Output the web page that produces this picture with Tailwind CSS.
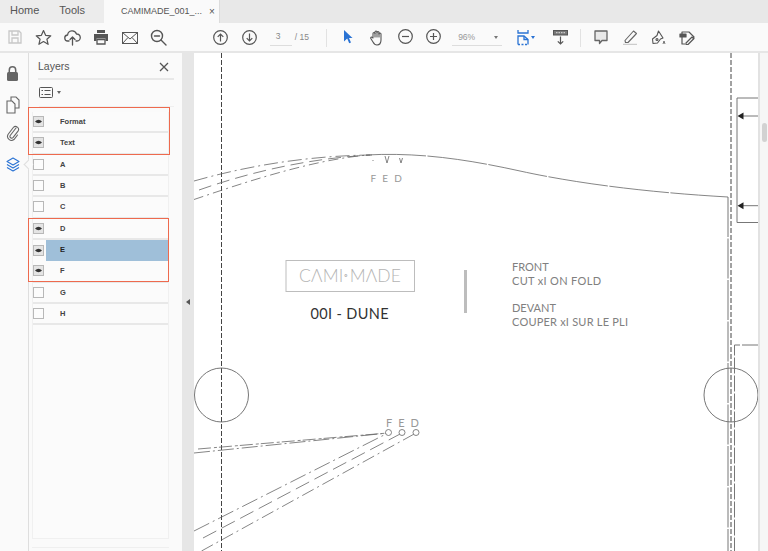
<!DOCTYPE html>
<html>
<head>
<meta charset="utf-8">
<script src="https://cdn.jsdelivr.net/npm/@tailwindcss/browser@4"></script>
</head>
<body class="m-0 bg-white">
<div class="relative w-[768px] h-[551px] overflow-hidden flex flex-col font-['Liberation_Sans',sans-serif] text-[#555]">
  <!-- tab bar -->
  <div class="h-[23px] flex bg-[#e8e8e8] shrink-0">
    <div class="w-[104px] flex items-center text-[11px] text-[#555] bg-[#ececec] pb-[2px]">
      <span class="ml-[10px]">Home</span>
      <span class="ml-[20px]">Tools</span>
    </div>
    <div class="w-[116px] flex items-center bg-[#fafafa] border-r border-[#dcdcdc] text-[9px] text-[#555] pt-[1px]">
      <span class="ml-[17px]">CAMIMADE_001_...</span>
      <span class="ml-[7px] text-[10px] leading-none">×</span>
    </div>
  </div>
  <!-- toolbar -->
  <div class="h-[30px] shrink-0 flex items-center bg-[#fafafa] border-b-2 border-[#e6e6e6] text-[#666] pt-[1px]">
    <div class="flex ml-px">
      <span class="w-[28.6px] flex justify-center"><svg width="16" height="16" viewBox="0 0 16 16" fill="none" stroke="#c8c8c8" stroke-width="1.3"><path d="M2 2h10l2 2v10H2z"/><path d="M5 2v4h6V2M5 14V9h6v5"/></svg></span>
      <span class="w-[28.6px] flex justify-center"><svg width="17" height="17" viewBox="0 0 17 17" fill="none" stroke="#555" stroke-width="1.2" stroke-linejoin="round"><path d="M8.5 1.5l2.1 4.8 5.2.5-3.9 3.4 1.2 5.1-4.6-2.7-4.6 2.7 1.2-5.1L1.2 6.8l5.2-.5z"/></svg></span>
      <span class="w-[28.6px] flex justify-center"><svg width="17" height="17" viewBox="0 0 17 17" fill="none" stroke="#555" stroke-width="1.3" stroke-linecap="round" stroke-linejoin="round"><path d="M5 12H4a3 3 0 0 1-.4-6A4.6 4.6 0 0 1 12.5 5a3.5 3.5 0 0 1 .5 7h-1"/><path d="M8.5 16V8M6 10.5l2.5-2.5 2.5 2.5"/></svg></span>
      <span class="w-[28.6px] flex justify-center"><svg width="16" height="16" viewBox="0 0 16 16"><path fill="#555" d="M4 1h8v3H4zM1 5h14v7h-2.5V9.500h-9V12H1z"/><path fill="none" stroke="#555" stroke-width="1.3" d="M4 10.500h8V15H4z"/></svg></span>
      <span class="w-[28.6px] flex justify-center items-center"><svg width="16" height="12" viewBox="0 0 16 12" fill="none" stroke="#555" stroke-width="1"><rect x=".5" y=".5" width="15" height="11"/><path d="M.5.500L8 7l7.500-6.500M.5 11.500L6 5.500M15.500 11.500L10 5.500"/></svg></span>
      <span class="w-[28.6px] flex justify-center"><svg width="17" height="17" viewBox="0 0 17 17" fill="none" stroke="#555" stroke-width="1.4" stroke-linecap="round"><circle cx="7" cy="7" r="5.500"/><path d="M4.500 7h5M11 11l5 5"/></svg></span>
    </div>
    <div class="flex ml-[34px]">
      <span class="w-[28.6px] flex justify-center"><svg width="15" height="15" viewBox="0 0 15 15" fill="none" stroke="#555" stroke-width="1.2"><circle cx="7.500" cy="7.500" r="6.800"/><path d="M7.500 11.500V4M4.700 6.800l2.800-2.800 2.800 2.800"/></svg></span>
      <span class="w-[28.6px] flex justify-center"><svg width="15" height="15" viewBox="0 0 15 15" fill="none" stroke="#555" stroke-width="1.2"><circle cx="7.500" cy="7.500" r="6.800"/><path d="M7.500 3.500V11M4.700 8.200l2.800 2.800 2.800-2.800"/></svg></span>
    </div>
    <span class="ml-[6px] w-[22px] h-[17px] border-b border-[#ddd] pl-[6px] text-[8.5px] text-[#888] leading-[15px]">3</span>
    <span class="ml-[3px] w-[18px] text-[8.5px] text-[#888]">/ 15</span>
    <span class="ml-[13px] w-px h-[18px] bg-[#e2e2e2]"></span>
    <div class="flex ml-[7px]">
      <span class="w-[28.6px] flex justify-center"><svg width="12" height="15" viewBox="0 0 12 15"><path fill="#2a73d4" d="M2 1l8.500 8H7l2 4.500-1.800.8L5.200 9.600 2 12.500z"/></svg></span>
      <span class="w-[28.6px] flex justify-center"><svg width="16" height="17" viewBox="0 0 16 17" fill="none" stroke="#555" stroke-width="1.1" stroke-linejoin="round" stroke-linecap="round"><path d="M4 9V4.500a1 1 0 0 1 2 0V3a1 1 0 0 1 2 0v.5a1 1 0 0 1 2 0V5a1 1 0 0 1 2 0v6c0 3-1.500 5-4 5-2 0-3-1-4-3L1.800 9.500c-.6-1 .8-2 1.500-1z"/><path d="M6 4.500V8M8 3.500V8M10 4v4"/></svg></span>
      <span class="w-[28.6px] flex justify-center"><svg width="15" height="15" viewBox="0 0 15 15" fill="none" stroke="#555" stroke-width="1.200"><circle cx="7.500" cy="7.500" r="6.800"/><path d="M4 7.500h7"/></svg></span>
      <span class="w-[28.6px] flex justify-center"><svg width="15" height="15" viewBox="0 0 15 15" fill="none" stroke="#555" stroke-width="1.200"><circle cx="7.500" cy="7.500" r="6.800"/><path d="M4 7.500h7M7.500 4v7"/></svg></span>
    </div>
    <div class="ml-[4px] w-[50px] h-[17px] border-b border-[#ddd] flex items-center text-[8.5px] text-[#999]">
      <span class="ml-[6px]">96%</span>
      <span class="ml-[19px] w-0 h-0 border-x-[2.500px] border-t-[3px] border-x-transparent border-t-[#777]"></span>
    </div>
    <span class="ml-[15px] flex items-center"><svg width="12" height="17" viewBox="0 0 12 17" fill="none" stroke="#2a73d4" stroke-width="1.300"><path d="M1 1v3h10V1M1 15.500V7h6l4 3.500v5"/><path d="M1 15.500h10" stroke-dasharray="2 1.500"/><path d="M7 7v3.500h4"/></svg><span class="ml-[2px] w-0 h-0 border-x-[2.500px] border-t-[3px] border-x-transparent border-t-[#2a73d4]"></span></span>
    <span class="ml-[17px] w-[16px] flex justify-center"><svg width="15" height="15" viewBox="0 0 15 15" fill="none" stroke="#555"><rect x=".5" y=".5" width="14" height="4.500" fill="#777"/><path d="M3 2.700h9" stroke="#ddd" stroke-dasharray="1.500 1"/><path d="M7.500 6.500V14M4.800 11.300l2.700 2.700 2.700-2.700" stroke-width="1.200"/></svg></span>
    <span class="ml-[12px] w-px h-[18px] bg-[#e2e2e2]"></span>
    <div class="flex ml-[6px]">
      <span class="w-[28.6px] flex justify-center"><svg width="14" height="15" viewBox="0 0 14 15" fill="#e9e9e9" stroke="#666" stroke-width="1.300" stroke-linejoin="round"><path d="M1 1h12v9.500H8L5.500 13.500V10.500H1z"/></svg></span>
      <span class="w-[28.6px] flex justify-center"><svg width="16" height="15" viewBox="0 0 16 15" fill="none" stroke="#666" stroke-width="1.100" stroke-linejoin="round"><path d="M3 10.500L11.500 1l3 2.500L6 12.500H3.500z"/><path d="M1 14.500h14" stroke="#ccc" stroke-width="1.500"/></svg></span>
      <span class="w-[28.6px] flex justify-center"><svg width="16" height="15" viewBox="0 0 16 15" fill="none" stroke="#555" stroke-width="1.100" stroke-linejoin="round"><path d="M7.500 1L6 5.500 1.500 9 2 13.500 6.500 13 9.500 9 12 8z"/><circle cx="6" cy="9.500" r="1"/><path d="M12 14l1-3 1 3" stroke-width=".8"/></svg></span>
      <span class="w-[28.6px] flex justify-center"><svg width="16" height="16" viewBox="0 0 16 16" fill="none" stroke="#555" stroke-width="1.200" stroke-linejoin="round"><path d="M1 4h6v3H1z" fill="#555"/><path d="M3 4V2h7l5 5-1 2M3 7v7h3"/><path d="M7 13l6-6 2 1.500-6 6H7z"/></svg></span>
    </div>
  </div>
  <!-- body -->
  <div class="flex-1 flex min-h-0">
    <!-- rail -->
    <div class="relative w-[29px] shrink-0 bg-[#fafafa] border-r border-[#dedede] flex flex-col items-center pt-[12px] pr-[3px]">
      <svg width="13" height="18" viewBox="0 0 13 18"><path fill="none" stroke="#666" stroke-width="1.500" d="M3.300 8V5a3.200 3.200 0 0 1 6.400 0v3"/><rect x="1" y="7" width="11" height="9" rx="1.500" fill="#666"/></svg>
      <svg width="14" height="18" viewBox="0 0 14 18" fill="#fafafa" stroke="#666" stroke-width="1.100" class="mt-[13px]"><path d="M5 1h5l3 3v8H5z"/><path d="M1 5h5l3 3v9H1z"/></svg>
      <svg width="14" height="18" viewBox="0 0 14 18" fill="none" stroke="#666" stroke-width="1.100" stroke-linecap="round" class="mt-[10px]"><path d="M10 4L4.200 11.500a1.800 1.800 0 0 0 2.800 2.200l5-6.500A3 3 0 0 0 7.300 3.500L2 10.500a4 4 0 0 0 6 5l3.500-4.500"/></svg>
      <svg width="14" height="16" viewBox="0 0 14 16" fill="none" stroke="#2a73d4" stroke-width="1.100" stroke-linejoin="round" class="mt-[15px]"><path d="M7 1l6 3.500L7 8 1 4.500z"/><path d="M1 7.500L7 11l6-3.500M1 10.500L7 14l6-3.500"/></svg>
      <span class="absolute right-[-4px] top-[108px] w-[7px] h-[7px] rotate-45 bg-[#fafafa] border-l border-b border-[#dedede]"></span>
    </div>
    <!-- panel -->
    <div class="w-[153px] shrink-0 bg-[#fafafa] flex flex-col">
      <div class="h-[27px] mx-[9px] mr-[8px] pt-[3px] flex items-center justify-between border-b-2 border-[#e8e8e8] text-[10.5px] text-[#555]">
        <span>Layers</span>
        <svg width="10" height="10" viewBox="0 0 10 10" stroke="#555" stroke-width="1.300" class="mr-[5px]"><path d="M1 1l8 8M9 1L1 9"/></svg>
      </div>
      <div class="h-[27px] ml-[10px] flex items-center border-b border-[#efefef] mr-[8px] pb-[1px]">
        <svg width="14" height="11" viewBox="0 0 14 11" fill="none" stroke="#555"><rect x=".5" y=".5" width="13" height="10" rx="1"/><path d="M2.500 3.500h1.500M5.500 3.500h6M2.500 7.500h1.500M5.500 7.500h6"/></svg>
        <span class="ml-[4px] w-0 h-0 border-x-[2.500px] border-t-[3px] border-x-transparent border-t-[#666]"></span>
      </div>
      <div class="ml-[3px] mr-[13px] h-[427px] mt-[5px] flex flex-col border-x border-b border-[#f0f0f0] text-[7.500px] font-bold text-[#444] bg-[#fbfbfb]">
        <div class="h-[21.330px] flex border-b-2 border-[#e8e8e8]"><span class="w-[27px] flex items-center"><span class="w-[11px] h-[11px] border border-[#b8b8b8] bg-[#e4e4e4] flex items-center justify-center"><svg width="7" height="5" viewBox="0 0 9 6"><path fill="#333" d="M0 3q4.500-4.500 9 0-4.500 4.500-9 0z"/></svg></span></span><span class="pt-[4px]">Format</span></div>
        <div class="h-[21.330px] flex border-b-2 border-[#e8e8e8]"><span class="w-[27px] flex items-center"><span class="w-[11px] h-[11px] border border-[#b8b8b8] bg-[#e4e4e4] flex items-center justify-center"><svg width="7" height="5" viewBox="0 0 9 6"><path fill="#333" d="M0 3q4.500-4.500 9 0-4.500 4.500-9 0z"/></svg></span></span><span class="pt-[4px]">Text</span></div>
        <div class="h-[21.330px] flex border-b-2 border-[#e8e8e8]"><span class="w-[27px] flex items-center"><span class="w-[11px] h-[11px] border border-[#b8b8b8] bg-[#fcfcfc]"></span></span><span class="pt-[4px]">A</span></div>
        <div class="h-[21.330px] flex border-b-2 border-[#e8e8e8]"><span class="w-[27px] flex items-center"><span class="w-[11px] h-[11px] border border-[#b8b8b8] bg-[#fcfcfc]"></span></span><span class="pt-[4px]">B</span></div>
        <div class="h-[21.330px] flex border-b-2 border-[#e8e8e8]"><span class="w-[27px] flex items-center"><span class="w-[11px] h-[11px] border border-[#b8b8b8] bg-[#fcfcfc]"></span></span><span class="pt-[4px]">C</span></div>
        <div class="h-[21.330px] flex border-b-2 border-[#e8e8e8]"><span class="w-[27px] flex items-center"><span class="w-[11px] h-[11px] border border-[#b8b8b8] bg-[#e4e4e4] flex items-center justify-center"><svg width="7" height="5" viewBox="0 0 9 6"><path fill="#333" d="M0 3q4.500-4.500 9 0-4.500 4.500-9 0z"/></svg></span></span><span class="pt-[4px]">D</span></div>
        <div class="h-[21.330px] flex"><span class="w-[13px] shrink-0 flex items-center"><span class="shrink-0 w-[11px] h-[11px] border border-[#b8b8b8] bg-[#e4e4e4] flex items-center justify-center"><svg width="7" height="5" viewBox="0 0 9 6"><path fill="#333" d="M0 3q4.500-4.500 9 0-4.500 4.500-9 0z"/></svg></span></span><span class="flex-1 bg-[#9fbfd9] pl-[14px] pt-[4px] text-[#222]">E</span></div>
        <div class="h-[21.330px] flex border-b-2 border-[#e8e8e8]"><span class="w-[27px] flex items-center"><span class="w-[11px] h-[11px] border border-[#b8b8b8] bg-[#e4e4e4] flex items-center justify-center"><svg width="7" height="5" viewBox="0 0 9 6"><path fill="#333" d="M0 3q4.500-4.500 9 0-4.500 4.500-9 0z"/></svg></span></span><span class="pt-[4px]">F</span></div>
        <div class="h-[21.330px] flex border-b-2 border-[#e8e8e8]"><span class="w-[27px] flex items-center"><span class="w-[11px] h-[11px] border border-[#b8b8b8] bg-[#fcfcfc]"></span></span><span class="pt-[4px]">G</span></div>
        <div class="h-[21.330px] flex border-b-2 border-[#e8e8e8]"><span class="w-[27px] flex items-center"><span class="w-[11px] h-[11px] border border-[#b8b8b8] bg-[#fcfcfc]"></span></span><span class="pt-[4px]">H</span></div>
      </div>
      <div class="ml-[3px] mr-[13px] mt-[8px] h-px bg-[#efefef]"></div>
    </div>
    <!-- gutter -->
    <div class="w-[12px] shrink-0 bg-[#e6e6e6] flex items-center justify-center">
      <span class="w-0 h-0 border-y-[3px] border-r-[4px] border-y-transparent border-r-[#555]"></span>
    </div>
    <!-- document -->
    <div class="flex-1 bg-white min-w-0">
      <svg width="564" height="498" viewBox="194 53 564 498" class="block" fill="none">
        <g stroke="#444" stroke-width="1">
          <path d="M221.500 53V551M731 53V551" stroke-dasharray="5 2"/>
        </g>
        <g stroke="#777" stroke-width="1">
          <circle cx="221.500" cy="395" r="27"/>
          <circle cx="731" cy="395" r="27"/>
          <path d="M758 98H737V222.500H758M743 116H758M743 205.700H758"/>
          <path d="M728 197V551" stroke-dasharray="40 1.500"/>
          <path d="M758 345H734.500V551" stroke-dasharray="16 2"/>
        </g>
        <path fill="#222" d="M737.500 116l6-3.500v7zM737.500 205.700l6-3.500v7z"/>
        <g stroke="#666" stroke-width=".8">
          <path d="M194 181C240 168 300 156 370 155" stroke-dasharray="14 4 2 4"/>
          <path d="M199 190C250 172 310 158 372 155" stroke-dasharray="13 6"/>
          <path d="M194 199.500C240 184 310 160 368 155" stroke-dasharray="10 4 2 4"/>
          <path d="M366 155C420 152 470 160 520 171S640 192 728 197" stroke-dasharray="60 1.500"/>
          <path d="M373 160v1M385 156l2 7 2-7M399.500 158l1.500 5 1.500-5"/>
          <path d="M194 453L388 433" stroke-dasharray="16 3 2 3"/>
          <path d="M198 449L388 433" stroke-dasharray="13 3 3 2"/>
          <path d="M194 531L388 433" stroke-dasharray="17 4 2 4"/>
          <path d="M203 538L402 433" stroke-dasharray="15 6"/>
          <path d="M201.500 551L416 433" stroke-dasharray="13 4 2 4"/>
          <circle cx="388.500" cy="432.500" r="3" fill="#fff"/>
          <circle cx="402" cy="432.500" r="3" fill="#fff"/>
          <circle cx="416" cy="432.500" r="3" fill="#fff"/>
        </g>
        <rect x="286" y="260.500" width="128.500" height="31" stroke="#bdbdbd"/>
        <rect x="464" y="270" width="3" height="43" fill="#bdbdbd"/>
        <g font-family="Lato, sans-serif">
          <text x="370.500" y="182" font-size="10" fill="#999" letter-spacing="6.200">FED</text>
          <text x="386" y="427" font-size="11" fill="#999" letter-spacing="6">FED</text>
          <text x="299" y="281.500" font-size="17.500" fill="#b4b4b4" font-weight="300" textLength="102">CΛMI<tspan font-size="9" dy="-3">∘</tspan><tspan dy="3">MΛDE</tspan></text>
          <text x="310.500" y="318.500" font-size="14.500" fill="#333" textLength="78">00I - DUNE</text>
          <g font-size="11" fill="#808080">
            <text x="512" y="271">FRONT</text>
            <text x="512" y="285" textLength="89">CUT xI ON FOLD</text>
            <text x="512" y="312">DEVANT</text>
            <text x="512" y="326" textLength="116">COUPER xI SUR LE PLI</text>
          </g>
        </g>
      </svg>
    </div>
    <!-- scrollbar -->
    <div class="w-[10px] shrink-0 bg-[#f6f6f6] border-l-2 border-[#e2e2e2] pl-[2px] pt-[70px]">
      <div class="w-[5px] h-[19px] rounded-full bg-[#d2d2d2]"></div>
    </div>
  </div>
  <!-- highlighted groups -->
  <div class="absolute left-[28px] top-[107px] w-[142px] h-[48px] border border-[#ee6a4e]"></div>
  <div class="absolute left-[28px] top-[218px] w-[141px] h-[64px] border border-[#ee6a4e]"></div>
</div>
</body>
</html>
